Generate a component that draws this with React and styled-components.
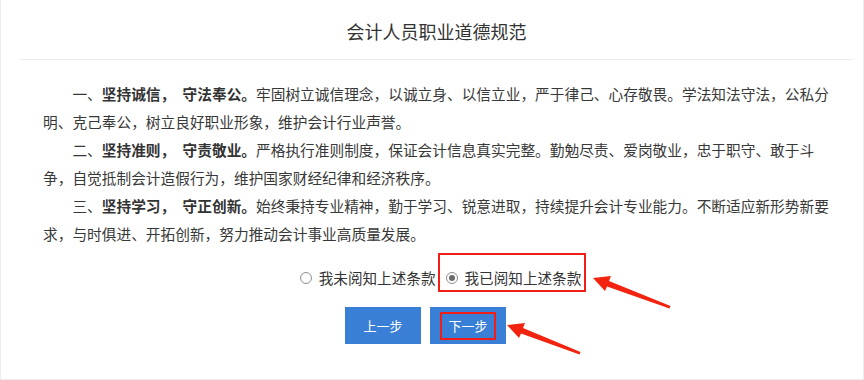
import React from "react";
import styled, { createGlobalStyle, css } from "styled-components";

const Global = createGlobalStyle`
  html, body { margin: 0; padding: 0; background: #fff; }
  body { font-family: "Noto Sans CJK SC", "Noto Sans", sans-serif; color: #333; }
  * { box-sizing: border-box; }
`;

const Page = styled.div`
  position: relative;
  width: 864px;
  height: 380px;
  background: #fff;
  border-left: 1px solid #ececec;
  border-right: 1px solid #ececec;
  border-bottom: 1px solid #ececec;
  display: flex;
  flex-direction: column;
  overflow: hidden;
`;

const Header = styled.header`
  height: 60px;
  display: flex;
  align-items: center;
  justify-content: center;
  padding-top: 2px;
  margin: 0 10px 0 19px;
  border-bottom: 1px solid #eeeeee;
`;

const Title = styled.h1`
  margin: 0;
  font-size: 18px;
  font-weight: 400;
  color: #333;
  line-height: 24px;
`;

const Body = styled.section`
  padding: 20px 32px 0 42px;
`;

const Para = styled.p`
  margin: 0;
  font-size: 14.7px;
  line-height: 28px;
  text-indent: 2em;
  color: #383838;
`;

const Strong = styled.b`
  font-weight: 700;
  color: #333;
`;

const RadioRow = styled.div`
  display: flex;
  justify-content: center;
  align-items: center;
  gap: 10px;
  height: 30px;
  margin-top: 15px;
  padding-left: 17px;
`;

const Option = styled.label`
  position: relative;
  display: inline-flex;
  align-items: center;
  gap: 7px;
  font-size: 14.6px;
  line-height: 20px;
  color: #333;
  ${(p) =>
    p.$highlight &&
    css`
      &::after {
        content: "";
        position: absolute;
        left: -8px;
        right: -5px;
        top: -15px;
        bottom: -4px;
        border: 2px solid #f01e14;
      }
    `}
`;

const Radio = styled.span`
  width: 12px;
  height: 12px;
  border-radius: 50%;
  border: 1px solid #8f8f8f;
  background: #fff;
  display: inline-flex;
  align-items: center;
  justify-content: center;
  &::before {
    content: "";
    width: 6px;
    height: 6px;
    border-radius: 50%;
    background: ${(p) => (p.$checked ? "#6b6b6b" : "transparent")};
  }
`;

const ButtonRow = styled.div`
  display: flex;
  justify-content: center;
  gap: 9px;
  margin-top: 14px;
  padding-right: 13px;
`;

const Button = styled.button`
  position: relative;
  width: 76px;
  height: 37px;
  border: none;
  background: #3a7fd6;
  color: #fff;
  font-family: "Noto Sans CJK SC", sans-serif;
  font-size: 13px;
  padding: 0;
  cursor: pointer;
  ${(p) =>
    p.$highlight &&
    css`
      &::after {
        content: "";
        position: absolute;
        left: 10px;
        right: 10px;
        top: 5px;
        bottom: 4px;
        border: 2.5px solid #f01e14;
      }
    `}
`;

const Overlay = styled.svg`
  position: absolute;
  left: -1px;
  top: 0;
  width: 864px;
  height: 380px;
  pointer-events: none;
`;

export default function App() {
  return (
    <>
      <Global />
      <Page>
        <Header>
          <Title>会计人员职业道德规范</Title>
        </Header>
        <Body>
          <Para>
            一、<Strong>坚持诚信，{"\u2002"}守法奉公。</Strong>牢固树立诚信理念，以诚立身、以信立业，严于律己、心存敬畏。学法知法守法，公私分明、克己奉公，树立良好职业形象，维护会计行业声誉。
          </Para>
          <Para>
            二、<Strong>坚持准则，{"\u2002"}守责敬业。</Strong>严格执行准则制度，保证会计信息真实完整。勤勉尽责、爱岗敬业，忠于职守、敢于斗争，自觉抵制会计造假行为，维护国家财经纪律和经济秩序。
          </Para>
          <Para>
            三、<Strong>坚持学习，{"\u2002"}守正创新。</Strong>始终秉持专业精神，勤于学习、锐意进取，持续提升会计专业能力。不断适应新形势新要求，与时俱进、开拓创新，努力推动会计事业高质量发展。
          </Para>
        </Body>
        <RadioRow>
          <Option>
            <Radio />
            我未阅知上述条款
          </Option>
          <Option $highlight>
            <Radio $checked />
            我已阅知上述条款
          </Option>
        </RadioRow>
        <ButtonRow>
          <Button>上一步</Button>
          <Button $highlight>下一步</Button>
        </ButtonRow>
        <Overlay viewBox="0 0 864 380">
          <polygon
            fill="#f2230f"
            points="593,278 611,276 609,281 670.5,306 669.5,308.5 607,286.5 605,291"
          />
          <polygon
            fill="#f2230f"
            points="507,325 525,323 523,328 580.5,352 579.5,354.5 521,333.5 519,338"
          />
        </Overlay>
      </Page>
    </>
  );
}
